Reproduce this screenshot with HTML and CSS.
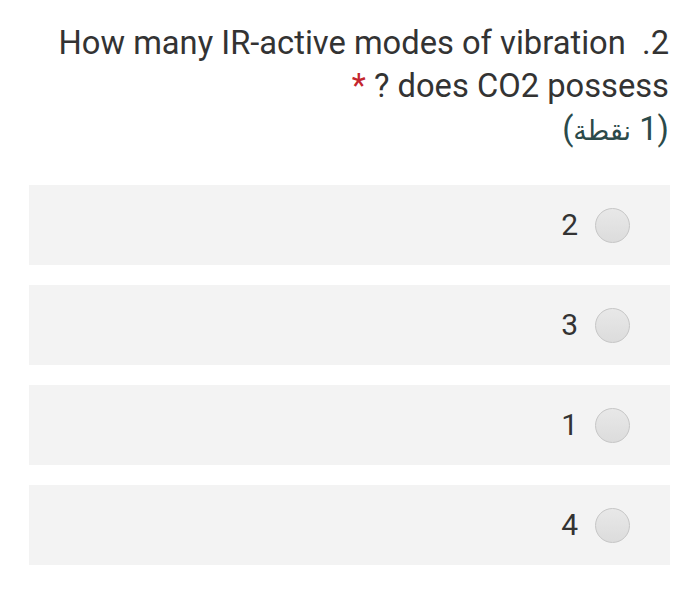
FILE: index.html
```html
<!DOCTYPE html>
<html lang="ar">
<head>
<meta charset="utf-8">
<link rel="stylesheet" href="styles.css">
</head>
<body>
<div class="question">
  <div class="title">
    <span class="line" dir="rtl">2.  How many IR-active modes of vibration</span>
    <span class="line" dir="rtl">does CO2 possess ? <span class="req">*</span></span>
    <span class="line points" dir="rtl">(1 <span class="ar">نقطة</span>)</span>
  </div>
  <div class="options">
    <label class="option"><span class="val">2</span><span class="radio"></span></label>
    <label class="option"><span class="val">3</span><span class="radio"></span></label>
    <label class="option"><span class="val">1</span><span class="radio"></span></label>
    <label class="option"><span class="val">4</span><span class="radio"></span></label>
  </div>
</div>
</body>
</html>
```
FILE: styles.css
```css
html, body {
  margin: 0;
  padding: 0;
  background: #ffffff;
}
body {
  font-family: Roboto, "DejaVu Sans", sans-serif;
  color: #333333;
}
.question {
  padding: 22px 30px 0 29px;
}
.title {
  display: flex;
  flex-direction: column;
  align-items: flex-end;
  padding-right: 1px;
  font-size: 32.7px;
  line-height: 43px;
}
.line {
  display: block;
  text-align: right;
  white-space: pre;
}
.req {
  color: #c4262e;
}
.points {
  color: #2b4a4a;
}
.ar {
  font-size: 27px;
}
.options {
  margin-top: 32px;
  display: flex;
  flex-direction: column;
  gap: 20px;
}
.option {
  height: 80px;
  background: #f3f3f3;
  display: flex;
  align-items: center;
  justify-content: flex-end;
  gap: 17px;
  padding-right: 40px;
}
.val {
  font-size: 30px;
  color: #333333;
  line-height: 1;
}
.radio {
  width: 33px;
  height: 33px;
  border-radius: 50%;
  border: 1px solid #c6c6c6;
  background: linear-gradient(#e8e8e8, #dcdcdc);
}
```
